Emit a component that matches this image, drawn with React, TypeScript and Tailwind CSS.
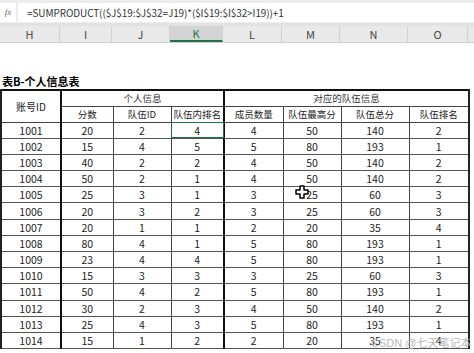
import React from "react"

const cols = [
  { key: "H", w: 60 },
  { key: "I", w: 52 },
  { key: "J", w: 58 },
  { key: "K", w: 53 },
  { key: "L", w: 59 },
  { key: "M", w: 58 },
  { key: "N", w: 68 },
  { key: "O", w: 60 },
]

const rows = [
  ["1001", "20", "2", "4", "4", "50", "140", "2"],
  ["1002", "15", "4", "5", "5", "80", "193", "1"],
  ["1003", "40", "2", "2", "4", "50", "140", "2"],
  ["1004", "50", "2", "1", "4", "50", "140", "2"],
  ["1005", "25", "3", "1", "3", "25", "60", "3"],
  ["1006", "20", "3", "2", "3", "25", "60", "3"],
  ["1007", "20", "1", "1", "2", "20", "35", "4"],
  ["1008", "80", "4", "1", "5", "80", "193", "1"],
  ["1009", "23", "4", "4", "5", "80", "193", "1"],
  ["1010", "15", "3", "3", "3", "25", "60", "3"],
  ["1011", "50", "4", "2", "5", "80", "193", "1"],
  ["1012", "30", "2", "3", "4", "50", "140", "2"],
  ["1013", "25", "4", "3", "5", "80", "193", "1"],
  ["1014", "15", "1", "2", "2", "20", "35", "4"],
]

const font = { fontFamily: '"Noto Sans CJK SC", "Noto Sans", sans-serif' }

function cellBorder(i: number) {
  if (i === 0) return "border-l-2 border-l-[#222]"
  if (i === 1 || i === 4) return "border-l-2 border-l-[#111]"
  return "border-l border-l-[#444]"
}

export default function App() {
  return (
    <div className="relative w-[474px] h-[353px] overflow-hidden bg-white text-[#222]" style={font}>
      {/* formula bar */}
      <div className="flex h-[23px] bg-[#ededed] pt-[3px] pb-[1px] gap-[2px]">
        <div className="w-[16px] bg-white flex items-center justify-center text-[9px] italic text-[#666]" style={{ fontFamily: '"Liberation Serif", serif' }}>
          fx
        </div>
        <div className="flex-1 bg-white flex items-center pl-[9px] text-[10px] text-[#333] whitespace-nowrap tracking-[-0.1px]">
          =SUMPRODUCT(($J$19:$J$32=J19)*($I$19:$I$32&gt;I19))+1
        </div>
      </div>
      <div className="h-[3px] bg-[#e2e2e2]" />

      {/* column headers */}
      <div className="flex h-[17px] bg-[#e9e9e9] border-b border-b-[#d0d0d0] text-[11px] text-[#444]">
        {cols.map(c => (
          <div
            key={c.key}
            style={{ width: c.w }}
            className={
              "flex items-center justify-center border-r border-r-[#d2d2d2] " +
              (c.key === "K" ? "bg-[#d4d4d4] border-b-2 border-b-[#217346] text-[#217346]" : "")
            }
          >
            {c.key}
          </div>
        ))}
        <div className="flex-1 bg-[#e9e9e9]" />
      </div>

      {/* title */}
      <div className="h-[46px] flex items-end pl-[2px] pb-[1px]">
        <span className="text-[11px] font-bold text-black leading-[14px]">表B-个人信息表</span>
      </div>

      <table className="border-collapse table-fixed text-[10.5px] text-[#222] border-t-2 border-t-[#111] border-r-2 border-r-[#222]">
        <colgroup>
          {cols.map(c => (
            <col key={c.key} style={{ width: c.w }} />
          ))}
        </colgroup>
        <tbody>
          <tr className="h-[16px]">
            <td rowSpan={2} className="text-center border-l-2 border-l-[#222] border-b border-b-[#444] text-[10px]">账号ID</td>
            <td colSpan={3} className="text-center border-l-2 border-l-[#111] border-b border-b-[#444] text-[9.5px] text-[#333]">个人信息</td>
            <td colSpan={4} className="text-center border-l-2 border-l-[#111] border-b border-b-[#444] text-[9.5px] text-[#333]">对应的队伍信息</td>
          </tr>
          <tr className="h-[16px] text-[9.5px]">
            {["分数", "队伍ID", "队伍内排名", "成员数量", "队伍最高分", "队伍总分", "队伍排名"].map((t, i) => (
              <td key={t} className={"text-center whitespace-nowrap border-b border-b-[#444] " + cellBorder(i + 1)}>{t}</td>
            ))}
          </tr>
          {rows.map((r, ri) => (
            <tr key={r[0]} className="h-[16.2px]">
              {r.map((v, i) => (
                <td
                  key={i}
                  className={
                    "text-center leading-[15px] p-0 border-b border-b-[#555] " +
                    cellBorder(i) +
                    (ri === 0 && i === 3 ? " outline outline-[1.5px] outline-[#217346] -outline-offset-1" : "")
                  }
                >
                  {v}
                </td>
              ))}
            </tr>
          ))}
        </tbody>
      </table>

      {/* move cursor */}
      <svg className="absolute left-[295px] top-[185px]" width="14" height="14" viewBox="0 0 14 14">
        <path d="M5 1h4v4h4v4h-4v4h-4v-4h-4v-4h4z" fill="white" stroke="black" strokeWidth="1.5" strokeLinejoin="round" />
      </svg>

      {/* watermark */}
      <div className="absolute left-[371px] top-[335px] text-[11px] text-[#b8b8b8] whitespace-nowrap" style={{ fontFamily: '"Liberation Sans", "Noto Sans CJK SC", sans-serif' }}>
        CSDN @七天笔记本
      </div>
    </div>
  )
}
